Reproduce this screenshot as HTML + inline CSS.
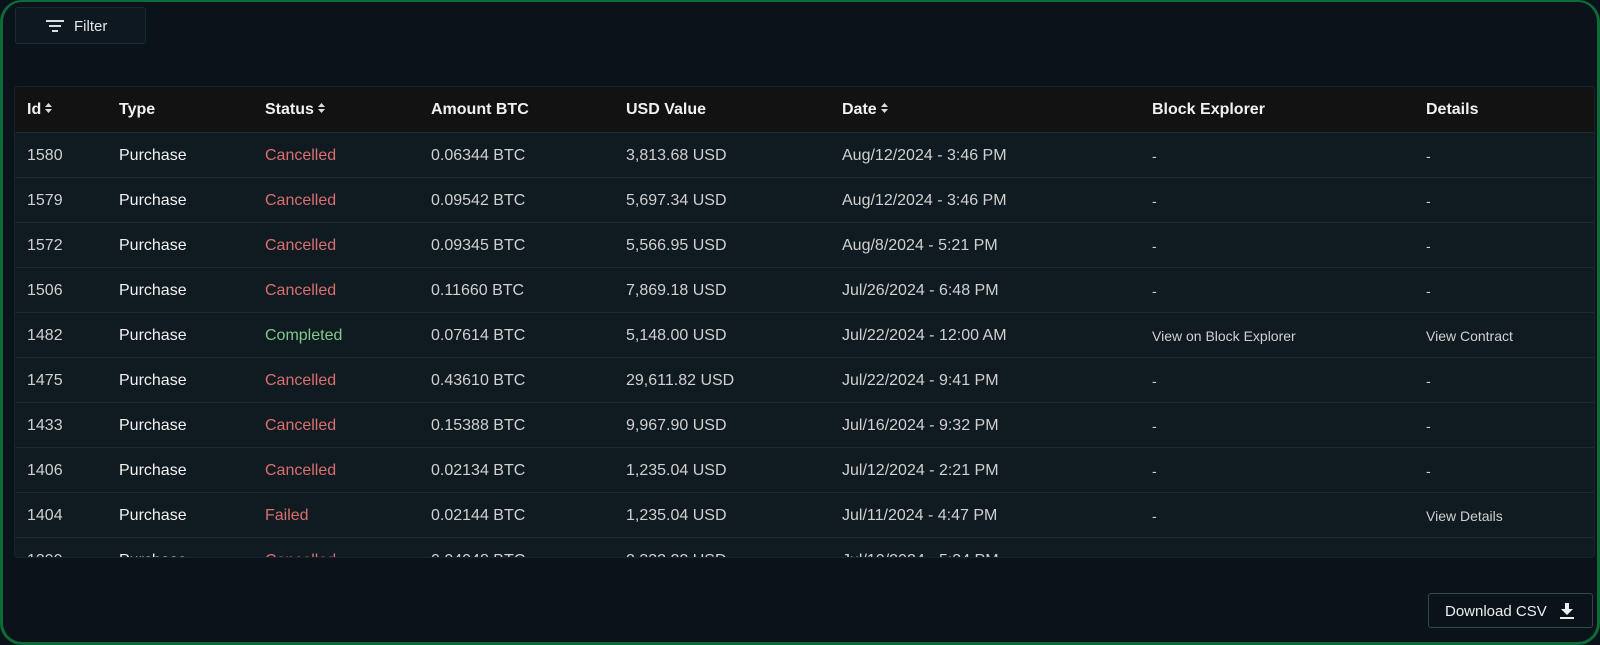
<!DOCTYPE html>
<html><head><meta charset="utf-8"><style>
*{box-sizing:border-box;margin:0;padding:0}
body{width:1600px;height:645px;background:#0b131a;font-family:"Liberation Sans",sans-serif;overflow:hidden}
.outer{position:absolute;left:0;top:0;width:1600px;height:645px;border:3px solid #0e6a38;border-top-width:2px;border-radius:22px;background:#0b131a;overflow:hidden}
.filter{position:absolute;left:12px;top:5px;width:131px;height:37px;border:1px solid #1d2a33;border-radius:3px;background:#0e1820;color:#e6e6e6;font-size:15px}
.filter span{position:absolute;left:58px;top:10px}
.tbl{position:absolute;left:11px;top:84px;width:1581px;height:472px;overflow:hidden;background:#101a21;border:1px solid #17232b;border-radius:4px}
.row{position:absolute;left:0;width:100%;height:45px;border-bottom:1px solid #1c2a34;font-size:16px;color:#d0d0d0}
.hdr{background:#121212;height:46px;font-weight:bold;color:#f0f0f0;border-bottom:1px solid #1c2a34}
.c{position:absolute;top:14px;white-space:nowrap}
.w{color:#f2f2f2}
.red{color:#d9706f}.grn{color:#7fc98a}
.sm{font-size:14px}
.s{display:inline-block;vertical-align:middle;margin-left:4px;margin-top:-3px}
.dl{position:absolute;left:1425px;top:591px;width:165px;height:35px;border:1px solid #3a444b;border-radius:3px;background:#0b131a;color:#eee;font-size:15px}
.dl span{position:absolute;left:16px;top:9px}
</style></head><body><div class="outer">
<div class="filter"><svg style="position:absolute;left:30px;top:11px" width="18" height="14"><rect x="0" y="1" width="18" height="2" fill="#ddd"/><rect x="3" y="6" width="12" height="2" fill="#ddd"/><rect x="6" y="11" width="6" height="2" fill="#ddd"/></svg><span>Filter</span></div>
<div class="tbl">
<div class="row hdr" style="top:0">
<div class="c" style="left:12px">Id<svg class="s" width="7" height="10"><path d="M3.5 0L7 4H0zM0 6h7L3.5 10z" fill="#ddd"/></svg></div>
<div class="c" style="left:104px">Type</div>
<div class="c" style="left:250px">Status<svg class="s" width="7" height="10"><path d="M3.5 0L7 4H0zM0 6h7L3.5 10z" fill="#ddd"/></svg></div>
<div class="c" style="left:416px">Amount BTC</div>
<div class="c" style="left:611px">USD Value</div>
<div class="c" style="left:827px">Date<svg class="s" width="7" height="10"><path d="M3.5 0L7 4H0zM0 6h7L3.5 10z" fill="#ddd"/></svg></div>
<div class="c" style="left:1137px">Block Explorer</div>
<div class="c" style="left:1411px">Details</div>
</div>
<div id="rows"></div>
</div>
<div class="dl"><span>Download CSV</span><svg style="position:absolute;left:131px;top:9px" width="14" height="16"><path d="M5 0h4v6h4l-6 6-6-6h4z" fill="#eee"/><rect x="0" y="14" width="14" height="2" fill="#eee"/></svg></div>
</div>
<script>
var d=[["1580","Cancelled","0.06344 BTC","3,813.68 USD","Aug/12/2024 - 3:46 PM","-","-"],
["1579","Cancelled","0.09542 BTC","5,697.34 USD","Aug/12/2024 - 3:46 PM","-","-"],
["1572","Cancelled","0.09345 BTC","5,566.95 USD","Aug/8/2024 - 5:21 PM","-","-"],
["1506","Cancelled","0.11660 BTC","7,869.18 USD","Jul/26/2024 - 6:48 PM","-","-"],
["1482","Completed","0.07614 BTC","5,148.00 USD","Jul/22/2024 - 12:00 AM","View on Block Explorer","View Contract"],
["1475","Cancelled","0.43610 BTC","29,611.82 USD","Jul/22/2024 - 9:41 PM","-","-"],
["1433","Cancelled","0.15388 BTC","9,967.90 USD","Jul/16/2024 - 9:32 PM","-","-"],
["1406","Cancelled","0.02134 BTC","1,235.04 USD","Jul/12/2024 - 2:21 PM","-","-"],
["1404","Failed","0.02144 BTC","1,235.04 USD","Jul/11/2024 - 4:47 PM","-","View Details"],
["1399","Cancelled","0.04048 BTC","2,332.22 USD","Jul/10/2024 - 5:34 PM","-","-"]];
var h="";d.forEach(function(r,i){var t=46+i*45;
h+='<div class="row" style="top:'+t+'px"><div class="c" style="left:12px">'+r[0]+'</div><div class="c w" style="left:104px">Purchase</div><div class="c '+(r[1]=="Completed"?"grn":"red")+'" style="left:250px">'+r[1]+'</div><div class="c" style="left:416px">'+r[2]+'</div><div class="c" style="left:611px">'+r[3]+'</div><div class="c" style="left:827px">'+r[4]+'</div><div class="c sm" style="left:1137px;top:15px">'+r[5]+'</div><div class="c sm" style="left:1411px;top:15px">'+r[6]+'</div></div>';});
document.getElementById("rows").innerHTML=h;
</script>
</body></html>
